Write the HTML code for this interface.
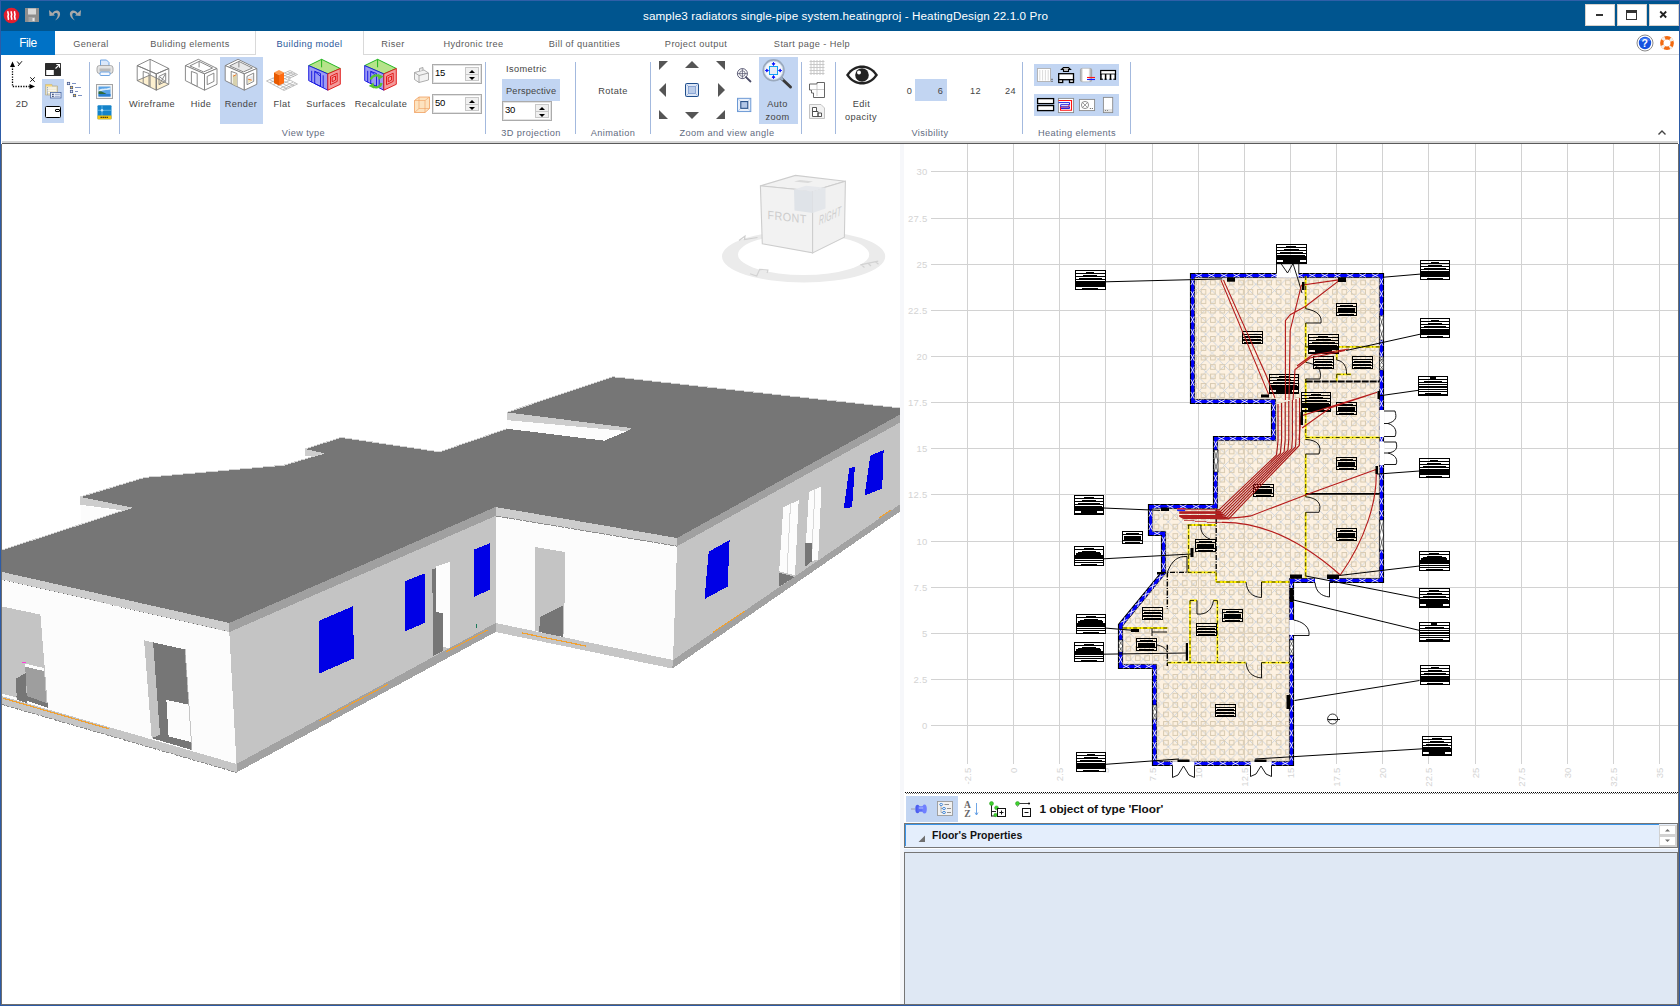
<!DOCTYPE html>
<html><head><meta charset="utf-8"><title>HeatingDesign</title>
<style>
*{box-sizing:border-box}
html,body{margin:0;padding:0}
body{width:1680px;height:1006px;position:relative;overflow:hidden;background:#fff;font-family:"Liberation Sans",sans-serif;font-size:9.200px;letter-spacing:0.400px;color:#444}
.abs{position:absolute}
.t{position:absolute;white-space:nowrap;line-height:12px;height:12px;transform:translate(-50%,-0.150px);text-align:center}
.tl{position:absolute;white-space:nowrap;line-height:12px;height:12px;transform:translateY(-0.050px)}
.hl{position:absolute;background:#c2d5f2}
.sep{position:absolute;width:1px;top:62px;height:72px;background:#a3b9de}
.grp{position:absolute;white-space:nowrap;line-height:12px;height:12px;transform:translate(-50%,-0.250px);color:#5f6b80;top:127px}
.tab{position:absolute;top:38px;white-space:nowrap;line-height:12px;height:12px;transform:translate(-50%,0.300px);color:#5a5a5a}
.spin{position:absolute;width:50px;height:20px;border:1px solid #ababab;background:#fff;box-shadow:inset 0 0 0 1px #e3e3e3}
.spin b{position:absolute;left:2px;top:2.200px;font-weight:normal;color:#000;font-size:9.500px;line-height:12px;letter-spacing:-0.200px}
.spin i{position:absolute;right:2px;width:14px;height:7.500px;background:#f0f0f0;border:1px solid #c8c8c8}
.spin i.u{top:2px}.spin i.d{bottom:2px}
.spin i:after{content:"";position:absolute;left:3px;top:2px;border-left:3px solid transparent;border-right:3px solid transparent}
.spin i.u:after{border-bottom:3px solid #000}
.spin i.d:after{border-top:3px solid #000}
svg{position:absolute;overflow:visible}
</style></head><body>
<!-- title bar -->
<div class="abs" style="left:0;top:0;width:1680px;height:31px;background:#00558f"></div>
<div class="abs" style="left:0;top:0;width:1680px;height:1px;background:#2f5fa8"></div>
<div class="abs" style="left:845.5px;top:9px;transform:translateX(-50%);color:#fff;font-size:11.700px;line-height:14px;white-space:nowrap;letter-spacing:0.090px">sample3 radiators single-pipe system.heatingproj - HeatingDesign 22.1.0 Pro</div>
<!-- app icon -->
<svg style="left:3px;top:7px" width="17" height="17" viewBox="0 0 17 17"><circle cx="8.5" cy="8.5" r="7.8" fill="#e31e2d"/><path d="M5.2 4.2c-1.2 1.6 1 2.6 0 4.3s1 2.600 0 4.300M8.500 4.200c-1.200 1.600 1 2.600 0 4.300s1 2.600 0 4.300M11.800 4.200c-1.200 1.600 1 2.600 0 4.300s1 2.600 0 4.300" stroke="#fff" stroke-width="1.600" fill="none"/></svg>
<!-- save icon -->
<svg style="left:25px;top:8px" width="14" height="14" viewBox="0 0 14 14"><rect x="0" y="0" width="14" height="14" fill="#8e8e8e"/><rect x="3" y="0.5" width="8" height="6" fill="#d9d9d9"/><rect x="3.500" y="9" width="6.500" height="5" fill="#a6a6a6"/><rect x="7.500" y="10" width="2" height="3" fill="#e6e6e6"/></svg>
<!-- undo / redo -->
<svg style="left:48px;top:7px" width="16" height="16" viewBox="0 0 16 16"><path d="M1 3 L1.500 9 L7 8.500 Z" fill="#a9a9a9"/><path d="M4 6.500 C7 1.500 13 3 12 8 C11.500 10.500 9.500 12.500 7 13.500 C9 11.500 10 9.500 9.700 7.500 C9.300 5.500 6.500 5.500 5.500 8" fill="#a9a9a9"/></svg>
<svg style="left:65.500px;top:7px" width="16" height="16" viewBox="0 0 16 16"><g transform="translate(16,0) scale(-1,1)"><path d="M1 3 L1.500 9 L7 8.500 Z" fill="#a9a9a9"/><path d="M4 6.500 C7 1.500 13 3 12 8 C11.500 10.500 9.500 12.500 7 13.500 C9 11.500 10 9.500 9.700 7.500 C9.300 5.500 6.500 5.500 5.500 8" fill="#a9a9a9"/></g></svg>
<!-- window buttons -->
<div class="abs" style="left:1585px;top:4px;width:30px;height:22px;background:#fff;border:1px solid #d8d2cc"></div>
<div class="abs" style="left:1617px;top:4px;width:30px;height:22px;background:#fff;border:1px solid #d8d2cc"></div>
<div class="abs" style="left:1649px;top:4px;width:30px;height:22px;background:#fff;border:1px solid #d8d2cc"></div>
<div class="abs" style="left:1596px;top:14px;width:7px;height:2px;background:#333"></div>
<div class="abs" style="left:1626px;top:10px;width:11px;height:10px;border:1px solid #333;border-top:3px solid #333"></div>
<svg style="left:1659px;top:10px" width="9" height="9" viewBox="0 0 9 9"><path d="M1.200 1.500L7.200 7.500M7.200 1.500L1.200 7.500" stroke="#222" stroke-width="1.800"/></svg>
<!-- tabs row -->
<div class="abs" style="left:1px;top:31px;width:54px;height:24px;background:#0072c6"></div>
<div class="abs" style="left:28px;top:35.500px;transform:translateX(-50%);color:#fff;font-size:12px;line-height:14px;letter-spacing:-0.4px">File</div>
<div class="abs" style="left:55px;top:54px;width:1624px;height:1px;background:#d9d9d9"></div>
<div class="abs" style="left:255px;top:31px;width:109px;height:24px;background:#fff;border:1px solid #d9d9d9;border-bottom:none;border-top:none"></div>
<div class="tab" style="left:91px">General</div>
<div class="tab" style="left:190px">Buliding elements</div>
<div class="tab" style="left:309.500px;color:#2b579a">Building model</div>
<div class="tab" style="left:393px">Riser</div>
<div class="tab" style="left:473.500px">Hydronic tree</div>
<div class="tab" style="left:584.500px">Bill of quantities</div>
<div class="tab" style="left:696px">Project output</div>
<div class="tab" style="left:812px">Start page - Help</div>
<!-- help icons -->
<svg style="left:1636px;top:34px" width="18" height="18" viewBox="0 0 18 18"><circle cx="9" cy="9" r="8" fill="#fff" stroke="#8a8a8a" stroke-width="1"/><circle cx="9" cy="9" r="6.200" fill="#1552e0"/><path d="M4 7a5.500 5.500 0 0 1 10 0a9 4 0 0 0-10 0z" fill="#5b93ff" opacity=".7"/><text x="9" y="12.800" font-family="Liberation Sans" font-weight="bold" font-size="10.500" fill="#fff" text-anchor="middle">?</text></svg>
<svg style="left:1659px;top:35px" width="16" height="16" viewBox="0 0 16 16"><circle cx="8" cy="8" r="5.200" fill="none" stroke="#f26a10" stroke-width="3.400"/><circle cx="8" cy="8" r="5.200" fill="none" stroke="#f3efe9" stroke-width="3.400" stroke-dasharray="3.200 5" stroke-dashoffset="1.600" transform="rotate(45 8 8)"/></svg>
<!-- ribbon body -->
<div class="abs" style="left:2px;top:141px;width:1676px;height:2px;background:#d6d6d6"></div>
<div class="abs" style="left:2px;top:143px;width:1676px;height:1px;background:#5a5a5a"></div>
<!-- group: 2D -->
<svg style="left:8px;top:58px" width="30" height="34" viewBox="8 58 30 34">
<path d="M12.500 66V86.500H30" stroke="#000" stroke-width="1.300" stroke-dasharray="1.300 1.300" fill="none"/>
<path d="M12.500 61.500L10 67H15Z" fill="#000"/><path d="M35 86.500L29.500 84V89Z" fill="#000"/>
<path d="M17.200 61.500L19.400 64.200M22 61.200L18 66" stroke="#000" stroke-width="0.900" fill="none"/>
<path d="M30.200 77.300L34.800 81.800M34.800 77.300L30.200 81.800" stroke="#000" stroke-width="0.900" fill="none"/>
</svg>
<div class="t" style="left:22px;top:98px">2D</div>
<svg style="left:45px;top:63px" width="16" height="13" viewBox="0 0 16 13"><rect width="16" height="13" rx="0.500" fill="#2b2b2b"/><rect x="1.200" y="7" width="7.600" height="5" fill="#fff"/><path d="M10.500 5.500L14.300 1.800M11.300 1.500H14.500V4.700" stroke="#fff" stroke-width="1.100" fill="none"/></svg>
<div class="hl" style="left:42px;top:79px;width:22px;height:44px"></div>
<!-- folder/properties icon -->
<svg style="left:45px;top:83px" width="17" height="16" viewBox="0 0 17 16"><path d="M0.500 1.500h6.500v1.500h5.500v9h-12z" fill="#e9e2c4" stroke="#b5ab86" stroke-width="0.700"/><rect x="0.800" y="1.600" width="6" height="1.600" fill="#f7d672"/><path d="M2 5h9M2 7.200h9M2 9.400h9" stroke="#fff" stroke-width="1"/><path d="M2 4.700h1M2 6.900h1M2 9.100h1M2 11h1" stroke="#5d79b3" stroke-width="0.800"/><rect x="5.500" y="9.500" width="10.500" height="5.500" fill="#eef2fa" stroke="#4a659e" stroke-width="0.800"/><path d="M7 11.300h1.800M7 13.300h1.800" stroke="#1d2f5e" stroke-width="1"/><path d="M9.800 11.300h5M9.800 13.300h5" stroke="#8a9cc6" stroke-width="0.900"/></svg>
<div class="abs" style="left:45px;top:106px;width:16px;height:12px;border:1.500px solid #000;border-radius:1.500px;background:#fff"></div>
<div class="abs" style="left:55px;top:108.500px;width:4.500px;height:3px;border:1px solid #000;border-radius:1px;background:#fff"></div>
<!-- tree icon -->
<svg style="left:66px;top:81px" width="18" height="18" viewBox="66 81 18 18"><g stroke="#3b4f86" stroke-width="0.700"><rect x="67.300" y="82.300" width="2.400" height="2.400" fill="#dfe6f5"/><rect x="70.300" y="86.300" width="2.400" height="2.400" fill="#f5c33a"/><rect x="70.300" y="90.300" width="2.400" height="2.400" fill="#dfe6f5"/><rect x="73.300" y="94.300" width="2.400" height="2.400" fill="#f5c33a"/></g><path d="M72 83.500h4M75 87.500h6M75 91.500h3M78 95.500h4" stroke="#6d86be" stroke-width="0.900"/></svg>
<div class="sep" style="left:89px"></div>
<!-- printer -->
<svg style="left:96px;top:59px" width="18" height="18" viewBox="0 0 18 18"><path d="M4.500 1h6l2.500 2.500V9h-8.500z" fill="#dbe8fa" stroke="#5d9be0" stroke-width="0.900"/><rect x="1" y="6.500" width="16" height="8" rx="2.500" fill="#e3e3e3" stroke="#9b9b9b" stroke-width="0.800"/><rect x="3.500" y="9.500" width="11" height="3" fill="#b9b9b9"/><rect x="4" y="13" width="10" height="3.500" rx="1" fill="#f4f8ff" stroke="#5d9be0" stroke-width="0.900"/></svg>
<!-- picture -->
<svg style="left:96px;top:84px" width="17" height="15" viewBox="0 0 17 15"><rect x="0.500" y="0.500" width="16" height="14" fill="#f3f3f3" stroke="#a4a4a4"/><rect x="2.500" y="2.500" width="12" height="10" fill="#5aa3e6"/><path d="M2.500 6.500c3-3 6-1 12-3v2c-4 1-8 0-12 3z" fill="#d9ecfb"/><path d="M2.500 7.500c3-1 5 1 8 2.500h-8z" fill="#2f6b3a"/><rect x="2.500" y="10" width="12" height="2.500" fill="#2c7fd1"/></svg>
<!-- dwg -->
<svg style="left:97px;top:105px" width="15" height="15" viewBox="0 0 15 15"><rect x="0.500" y="0.300" width="14" height="14" rx="1" fill="#1483c9"/><path d="M5 0.300V11M0.500 5.300H14.500" stroke="#7cc4ee" stroke-width="0.700"/><circle cx="5" cy="5.300" r="1.200" fill="#bfe4fa"/><rect x="0.500" y="10.500" width="14" height="3.800" fill="#f4c20d"/><path d="M3.500 12.400h8" stroke="#54430a" stroke-width="1.300" stroke-dasharray="1.500 0.500"/></svg>
<div class="sep" style="left:119px"></div>
<!-- view type group -->
<div class="hl" style="left:220px;top:57px;width:43px;height:67px"></div>
<svg style="left:0;top:0" width="1680" height="145" viewBox="0 0 1680 145">
<g transform="translate(137.2,59.3)" fill="none" stroke="#7d7d7d" stroke-width="0.9" stroke-linejoin="round">
<polygon points="0.0,21.3 19.1,30.9 31.6,25.0 12.9,15.7" fill="#fdf0cf" stroke="none"/>
<polygon points="12.9,0.0 31.6,9.2 19.1,14.6 0.0,6.3"/><polygon points="0.0,6.3 19.1,14.6 19.1,30.9 0.0,21.3"/><polygon points="19.1,14.6 31.6,9.2 31.6,25.0 19.1,30.9"/>
<path d="M12.9 0V15.7L0 21.3M12.9 15.7L31.6 25"/>
<polygon points="6.0,12.1 11.8,14.2 11.8,27.1 6.0,24.2"/><polygon points="21.8,17.1 28.5,13.8 28.5,22.1 21.8,25.4"/>
<path d="M12.9 15.700V27.800M19.100 14.600V30.900M22.500 17.500L28 22M22.500 24.800L28.200 14.500" />
</g>
<g transform="translate(185.4,59.3)" fill="#fff" stroke="#7d7d7d" stroke-width="0.9" stroke-linejoin="round">
<polygon points="12.9,0.0 31.6,9.2 19.1,14.6 0.0,6.3"/><polygon points="13.7,2.1 27.2,8.7 18.2,12.6 4.5,6.6"/><polygon points="0.0,6.3 19.1,14.6 19.1,30.9 0.0,21.3"/><polygon points="19.1,14.6 31.6,9.2 31.6,25.0 19.1,30.9"/>
<path d="M13.7 2.1V8.1"/>
<polygon points="6.0,12.1 11.8,14.2 11.8,27.1 6.0,24.2"/><polygon points="21.8,17.1 28.5,13.8 28.5,22.1 21.8,25.4"/>
</g>
<g transform="translate(225.2,59.3)" fill="#fff" stroke="#7d7d7d" stroke-width="0.9" stroke-linejoin="round">
<polygon points="12.9,0.0 31.6,9.2 19.1,14.6 0.0,6.3"/><polygon points="13.7,2.1 27.2,8.7 18.2,12.6 4.5,6.6" fill="#e9e9e9"/><polygon points="0.0,6.3 19.1,14.6 19.1,30.9 0.0,21.3"/><polygon points="19.1,14.6 31.6,9.2 31.6,25.0 19.1,30.9"/>
<path d="M13.7 2.1V8.1"/>
<polygon points="6.0,12.1 11.8,14.2 11.8,27.1 6.0,24.2"/><polygon points="7.5,15.0 11.8,16.5 11.8,27.1 7.5,25.0" fill="#d8d2ae" stroke="none"/><path d="M8 17L11 15.300" stroke="#f26a10" stroke-width="0.9"/>
<polygon points="21.8,17.1 28.5,13.8 28.5,22.1 21.8,25.4"/><polygon points="22.8,18.5 27.8,16.0 27.8,21.0 22.8,23.6" fill="#e9e9e9" stroke="none"/><polygon points="22.8,21.0 27.8,21.0 22.8,23.6" fill="#efe3b5" stroke="none"/><path d="M23 20L26.500 20.800" stroke="#f26a10" stroke-width="0.9"/>
</g>
<g fill="none" stroke="#9a9a9a" stroke-width="0.6">
<path d="M266.500 81L290 70.500L297.500 74.500L288 79L297.500 84L284 90.500Z"/>
<path d="M269.500 79.600L287 88.800M272.500 78.300L290.500 87.500M275.500 77L294 85.800M278.500 75.600L288.500 80.500M281.500 74.300L291 78.200M284.500 73L294 76.500M287.500 71.600L296 75.300"/>
<path d="M270 82.800L292.500 72M273.500 84.600L295 73.300M277 86.400L290 80.300M280.500 88.200L293 82.200M283 89.600L295.500 83.300"/>
</g>
<polygon points="274,72.500 279,70 284,72.500 279,75" fill="#ff9a4d"/><polygon points="274,72.500 279,75 279,85.500 274,83" fill="#e85a00"/><polygon points="279,75 284,72.500 284,83 279,85.500" fill="#ff6a10"/>
<g transform="translate(308.7,59.3)" stroke-width="0.9" stroke-linejoin="round">
<polygon points="12.9,0.0 31.6,9.2 19.1,14.6 0.0,6.3" fill="#b6e38a" stroke="#12b012"/>
<path d="M12.9 0V8" stroke="#12b012" fill="none"/>
<polygon points="0.0,6.3 19.1,14.6 19.1,30.9 0.0,21.3" fill="#9b9bf3" stroke="#1010e0"/>
<polygon points="19.1,14.6 31.6,9.2 31.6,25.0 19.1,30.9" fill="#f39a9a" stroke="#e01010"/>
<polygon points="6.0,12.1 11.8,14.2 11.8,27.1 6.0,24.2" fill="none" stroke="#1010e0"/><path d="M3 11.500V23M14.500 16V28.500M6 12.100L11.800 17" stroke="#1010e0" fill="none"/>
<polygon points="21.8,17.1 28.5,13.8 28.5,22.1 21.8,25.4" fill="none" stroke="#e01010"/><polygon points="23.5,18.3 26.8,16.7 26.8,20.8 23.5,22.5" fill="none" stroke="#e01010"/>
</g>
<g transform="translate(364.7,59.3)" stroke-width="0.9" stroke-linejoin="round">
<polygon points="12.9,0.0 31.6,9.2 19.1,14.6 0.0,6.3" fill="#b6e38a" stroke="#12b012"/>
<path d="M12.9 0V8" stroke="#12b012" fill="none"/>
<polygon points="0.0,6.3 19.1,14.6 19.1,30.9 0.0,21.3" fill="#9b9bf3" stroke="#1010e0"/>
<polygon points="19.1,14.6 31.6,9.2 31.6,25.0 19.1,30.9" fill="#f39a9a" stroke="#e01010"/>
<polygon points="6.0,12.1 11.8,14.2 11.8,27.1 6.0,24.2" fill="none" stroke="#1010e0"/><path d="M3 11.500V23M14.500 16V28.500M6 12.100L11.800 17" stroke="#1010e0" fill="none"/>
<polygon points="21.8,17.1 28.5,13.8 28.5,22.1 21.8,25.4" fill="none" stroke="#e01010"/><polygon points="23.5,18.3 26.8,16.7 26.8,20.8 23.5,22.5" fill="none" stroke="#e01010"/>
</g>
<g fill="none" stroke="#58c431" stroke-width="2.4" stroke-linecap="butt"><path d="M370.800 79.500A5.500 5.500 0 0 1 380 77"/><path d="M381.500 83A5.500 5.500 0 0 1 372 85.500"/></g>
<polygon points="378,74 383.500,76.500 378.500,80" fill="#58c431"/><polygon points="374,88.500 368.800,86 373.500,82.500" fill="#58c431"/>
<g fill="#f2f2f2" stroke="#9a9a9a" stroke-width="0.8" stroke-linejoin="round"><polygon points="414.500,72.500 424,70 428.500,73 428.500,80 419,82.500 414.500,79.500"/><path d="M414.500 72.500L419 75.500L428.500 73M419 75.500V82.500" fill="none"/><path d="M419.500 71V68.500L423 67.500V70" fill="#e8e8e8"/></g>
<g fill="#fde3c0" stroke="#f0a060" stroke-width="0.8" stroke-linejoin="round"><polygon points="414.500,100.500 419,97 429.500,97 429.500,108.500 425,112.500 414.500,112.500"/><path d="M414.500 100.500H425V112.500M425 100.500L429.500 97M419 97V108.500H429.500M419 108.500L414.500 112.500" fill="none" stroke-width="0.6"/></g>
</svg>
<div class="t" style="left:152px;top:98px">Wireframe</div>
<div class="t" style="left:201px;top:98px">Hide</div>
<div class="t" style="left:241px;top:98px">Render</div>
<div class="t" style="left:282px;top:98px">Flat</div>
<div class="t" style="left:326px;top:98px">Surfaces</div>
<div class="t" style="left:381px;top:98px">Recalculate</div>
<div class="spin" style="left:432px;top:64px"><b>15</b><i class="u"></i><i class="d"></i></div>
<div class="spin" style="left:432px;top:94px"><b>50</b><i class="u"></i><i class="d"></i></div>
<div class="grp" style="left:303.500px">View type</div>
<div class="sep" style="left:485px"></div>
<!-- 3D projection -->
<div class="tl" style="left:506px;top:63px">Isometric</div>
<div class="hl" style="left:502px;top:79px;width:58px;height:22px"></div>
<div class="tl" style="left:506px;top:85px;letter-spacing:0.200px">Perspective</div>
<div class="spin" style="left:502px;top:101px;height:20px"><b>30</b><i class="u"></i><i class="d"></i></div>
<div class="grp" style="left:531px">3D projection</div>
<div class="sep" style="left:575px"></div>
<div class="t" style="left:613px;top:85px">Rotate</div>
<div class="grp" style="left:613px">Animation</div>
<div class="sep" style="left:650px"></div>
<!-- zoom & view angle -->
<div class="hl" style="left:759px;top:57px;width:39px;height:67px"></div>
<svg style="left:0;top:0" width="1680" height="145" viewBox="0 0 1680 145">
<g fill="#555">
<polygon points="659,61 668,61 659,70"/><polygon points="685,68 692,61 699,68"/><polygon points="716,61 725,61 725,70"/>
<polygon points="666,83 659,90 666,97"/><polygon points="718,83 725,90 718,97"/>
<polygon points="659,110 668,119 659,119"/><polygon points="685,112 699,112 692,119"/><polygon points="725,110 725,119 716,119"/>
</g>
<rect x="685.500" y="83.500" width="13" height="13" rx="1" fill="#dce6f5" stroke="#1f4e8c" stroke-width="1"/>
<rect x="688.500" y="86.500" width="7" height="7" fill="#b9cbe8" stroke="#7c9bd0" stroke-width="0.800"/>
<path d="M686 84L688.500 86.500M698 84L695.500 86.500M686 96L688.500 93.500M698 96L695.500 93.500" stroke="#7c9bd0" stroke-width="0.600"/>
<!-- zoom cross -->
<circle cx="742.400" cy="73.600" r="5" fill="#fff" stroke="#4a4a66" stroke-width="0.900"/>
<path d="M742.400 68.600V78.600M737.400 73.600H747.400" stroke="#4a4a66" stroke-width="0.700" fill="none"/><circle cx="742.400" cy="73.600" r="2.800" fill="none" stroke="#4a4a66" stroke-width="0.700"/>
<path d="M746 77.200L750.500 81.500" stroke="#4a4a66" stroke-width="1.800" stroke-linecap="round"/>
<!-- zoom extents -->
<rect x="737.500" y="98.300" width="13.300" height="13.300" fill="#eaf0fa" stroke="#5d8fd1" stroke-width="0.900"/>
<path d="M737.500 98.300L740.800 101.600M750.800 98.300L747.800 101.600M737.500 111.600L740.800 108.300M750.800 111.600L747.800 108.300" stroke="#8fb0de" stroke-width="0.600"/>
<rect x="740.800" y="101.600" width="7" height="6.700" fill="#b3c6e6" stroke="#1b4580" stroke-width="1"/>
<!-- auto zoom magnifier -->
<path d="M781.500 78.500L790.500 87" stroke="#3a3a3a" stroke-width="3" stroke-linecap="round"/>
<path d="M780 77L783 80" stroke="#9fb2c8" stroke-width="2.200"/>
<circle cx="773.600" cy="70.300" r="10.300" fill="#f4f7fc" stroke="#9aa9bd" stroke-width="1.800"/>
<circle cx="773.600" cy="70.300" r="9.200" fill="none" stroke="#c9d6e6" stroke-width="0.800"/>
<rect x="769.500" y="66.500" width="8" height="8" fill="#e6ecf8" stroke="#14a0f0" stroke-width="1"/>
<g stroke="#0a14ff" stroke-width="0.900" fill="#0a14ff"><path d="M773.500 62V65M773.500 76V79M765 70.500H768M779 70.500H782" fill="none"/><polygon points="772.200,63.500 774.800,63.500 773.500,65.500" /><polygon points="772.200,77.500 774.800,77.500 773.500,75.500"/><polygon points="766.500,69.200 766.500,71.800 768.500,70.500"/><polygon points="780.500,69.200 780.500,71.800 778.500,70.500"/></g>
<!-- grid icon -->
<g stroke="#c4c4c4" stroke-width="0.900"><path d="M811 60V75M814 60V75M817 60V75M820 60V75M823 60V75M809.500 61.500H824.500M809.500 64.500H824.500M809.500 67.500H824.500M809.500 70.500H824.500M809.500 73.500H824.500"/></g>
<!-- plan icon -->
<path d="M809.500 84H817V82.500H824.500V97.500H813.500V93H811.500V90H809.500Z" fill="#fff" stroke="#555" stroke-width="0.900"/>
<path d="M817 84V96M811.500 89.500H824" stroke="#b8b8b8" stroke-width="0.700"/>
<!-- building doc icon -->
<path d="M809.500 104.500H821L824.500 108V118.500H809.500Z" fill="#f2f2f2" stroke="#b5b5b5" stroke-width="0.800"/>
<path d="M812.500 107.500H816.500V111.500H812.500ZM812.500 111.500H818V116.500H812.500ZM818 113H821.500V116.500H818Z" fill="#fff" stroke="#444" stroke-width="0.900"/>
<!-- eye -->
<path d="M846 75C851 67.500 857 65.500 862 65.500C867 65.500 873 67.500 878 75C873 82.500 867 84.500 862 84.500C857 84.500 851 82.500 846 75Z" fill="#222"/>
<path d="M849 75C853 69.500 857.500 68 862 68C866.500 68 871 69.500 875 75C871 80.500 866.500 82 862 82C857.500 82 853 80.500 849 75Z" fill="#fff"/>
<circle cx="862" cy="75" r="6.800" fill="#222"/><circle cx="859" cy="72.500" r="2" fill="#fff"/>
</svg>
<div class="t" style="left:777.500px;top:98px">Auto</div>
<div class="t" style="left:777.500px;top:111px">zoom</div>
<div class="grp" style="left:727px">Zoom and view angle</div>
<div class="sep" style="left:801px"></div>
<div class="sep" style="left:835px"></div>
<div class="t" style="left:861.500px;top:98px">Edit</div>
<div class="t" style="left:861px;top:111px">opacity</div>
<!-- visibility -->
<div class="hl" style="left:915px;top:79px;width:32px;height:22px"></div>
<div class="t" style="left:909.500px;top:85px">0</div>
<div class="t" style="left:940.500px;top:85px">6</div>
<div class="t" style="left:975.500px;top:85px">12</div>
<div class="t" style="left:1010.500px;top:85px">24</div>
<div class="grp" style="left:930px">Visibility</div>
<div class="sep" style="left:1022px"></div>
<!-- heating elements -->
<div class="hl" style="left:1034px;top:64px;width:85px;height:22px"></div>
<div class="hl" style="left:1034px;top:94px;width:85px;height:22px"></div>
<svg style="left:0;top:0" width="1680" height="145" viewBox="0 0 1680 145">
<rect x="1037.500" y="68.500" width="13" height="13" fill="#fff" stroke="#b0b0b0" stroke-width="0.900"/>
<path d="M1039.800 70V80.500M1042.600 70V80.500M1045.400 70V80.500M1048.200 70V80.500" stroke="#d0d0d0" stroke-width="0.800"/>
<path d="M1051 79.300H1053M1051 81.300H1053" stroke="#666" stroke-width="0.900"/>
<path d="M1061.500 69.500L1063.500 67.500H1068.500L1070.500 69.500H1068.500V71.500H1063.500V69.500Z" fill="#bdbdbd" stroke="#000" stroke-width="1.100"/>
<rect x="1058.700" y="73.700" width="14.800" height="6" fill="#fff" stroke="#000" stroke-width="1.300"/>
<rect x="1058.700" y="79.700" width="4" height="2.800" fill="#fff" stroke="#000" stroke-width="1.300"/>
<rect x="1069.500" y="79.700" width="4" height="2.800" fill="#fff" stroke="#000" stroke-width="1.300"/>
<defs><linearGradient id="tk" x1="0" x2="1"><stop offset="0" stop-color="#8f8f8f"/><stop offset="0.250" stop-color="#fff"/><stop offset="0.700" stop-color="#fff"/><stop offset="1" stop-color="#8a8a8a"/></linearGradient></defs>
<rect x="1080.300" y="68.300" width="11.500" height="13.500" rx="1.800" fill="url(#tk)" stroke="#a8a8a8" stroke-width="0.600"/>
<path d="M1087 77.500H1095" stroke="#ff1515" stroke-width="1.100"/><path d="M1087 79.500H1095" stroke="#1515ff" stroke-width="1.100"/>
<rect x="1100.700" y="70.500" width="14.800" height="3.700" fill="#fff" stroke="#000" stroke-width="1.200"/>
<rect x="1101.300" y="74.500" width="13.600" height="4.500" fill="#fff"/>
<path d="M1100.900 74V79.700M1105.600 74V79.700M1110.500 74V79.700M1115.300 74V79.700" stroke="#000" stroke-width="1.500"/>
<path d="M1100.200 79.200H1103M1104.500 79.200H1106.700M1109.400 79.200H1111.600M1113.300 79.200H1116" stroke="#000" stroke-width="1"/>
<rect x="1037.600" y="98.600" width="16" height="5" fill="#fff" stroke="#000" stroke-width="1.300"/>
<rect x="1037.600" y="105.600" width="16" height="5" fill="#fff" stroke="#000" stroke-width="1.300"/>
<rect x="1058.400" y="98.400" width="15.200" height="14.200" fill="#fff" stroke="#8a8a8a" stroke-width="0.900"/>
<path d="M1058.500 100.500H1071.500V110.300H1060.500V107H1069V104.500" stroke="#ff1010" stroke-width="1.100" fill="none"/>
<path d="M1058.500 102.600H1069.500V104.700H1060.700V106.900H1069.500V108.500H1061" stroke="#2020e0" stroke-width="1" fill="none"/>
<rect x="1079.400" y="99.400" width="15.200" height="11.200" fill="#fff" stroke="#8a8a8a" stroke-width="0.900"/>
<circle cx="1085" cy="105" r="3.600" fill="none" stroke="#777" stroke-width="0.800"/><path d="M1082.500 102.500L1087.500 107.500M1087.500 102.500L1082.500 107.500" stroke="#777" stroke-width="0.700"/>
<path d="M1089.800 108.500H1091M1091.800 108.500H1093" stroke="#777" stroke-width="1"/>
<rect x="1103.400" y="97.400" width="9.300" height="15.200" fill="#fff" stroke="#8a8a8a" stroke-width="0.900"/>
<rect x="1104" y="109" width="8" height="3" fill="#e3e3e3"/><path d="M1105 110.500H1106M1107 110.500H1108" stroke="#777" stroke-width="0.900"/>
<path d="M1658.500 134.500L1662 131L1665.500 134.500" stroke="#444" stroke-width="1.400" fill="none"/>
</svg>
<div class="grp" style="left:1077px">Heating elements</div>
<div class="sep" style="left:1130px"></div>
<!-- 3D view pane -->
<svg style="left:0;top:144px" width="900" height="860" viewBox="0 144 900 860">
<defs><clipPath id="c3d"><rect x="2" y="144" width="898" height="860"/></clipPath></defs>
<g clip-path="url(#c3d)" shape-rendering="crispEdges">
<!-- slabs -->
<polygon points="0,695 236.500,764 236.500,772.500 0,704" fill="#c6c6c6"/>
<polygon points="236.500,764 495.500,623 495.500,632 236.500,772.500" fill="#a2a2a2"/>
<polygon points="495.500,623 673,660 672.300,668.500 495.500,632" fill="#c6c6c6"/>
<polygon points="673,660 900,504.400 900,511.500 672.300,668.500" fill="#a2a2a2"/>
<!-- walls -->
<polygon points="0,578 229.300,632.100 236.500,764 0,695.500" fill="#fcfcfc"/>
<polygon points="229.300,632.100 495.500,516 495.500,623 236.500,764" fill="#c4c4c4"/>
<polygon points="495.500,516 677.100,546.200 673,660 495.500,623" fill="#fcfcfc"/>
<polygon points="677.100,546.200 900,422.500 900,504.400 673,660" fill="#c4c4c4"/>
<!-- roof -->
<polygon points="612.500,376.700 900,407.900 900,414.500 677.100,538 495.500,507 229.300,623 0,571.500 0,550.600 132.200,507.500 79.900,496.900 144.700,477.400 283.800,465.200 324.200,453.200 304.700,449 340.900,437.400 439.700,451.800 506.800,428.700 506.800,412.300" fill="#767676"/>
<path d="M506.800 412.300L612.500 376.700L900 407.900M0 550.600L132.200 507.500M79.900 496.900L144.700 477.400L283.800 465.200L324.200 453.200M304.700 449L340.900 437.400L439.700 451.800L506.800 428.700" stroke="#d4d4d4" stroke-width="1" fill="none"/>
<!-- fascias -->
<polygon points="0,571.500 229.300,623 229.300,632.100 0,579" fill="#cdcdcd"/>
<polygon points="229.300,623 495.500,507 495.500,516 229.300,632.100" fill="#a0a0a0"/>
<polygon points="495.500,507 677.100,538 677.100,546.200 495.500,516" fill="#cdcdcd"/>
<polygon points="677.100,538 900,414.500 900,422.500 677.100,546.200" fill="#a0a0a0"/>
<polygon points="506.800,412.300 632,428.200 627,431.200 506.800,420.100" fill="#cdcdcd"/>
<polygon points="506.800,420.100 627,431.200 604.200,440.700 506.800,428.700" fill="#fcfcfc"/>
<polygon points="79.900,496.900 132.200,507.500 124,510.500 79.900,504.700" fill="#cdcdcd"/>
<polygon points="80.500,505 118,511.500 81.500,523.500" fill="#fcfcfc"/>
<polygon points="304.700,449 324.200,453.200 316,456 304.700,455.500" fill="#cdcdcd"/>
<path d="M0 579L229.300 632.100" stroke="#707070" stroke-width="1" stroke-dasharray="1 3.600" fill="none"/><path d="M495.500 516L677.100 546.200" stroke="#8c8c8c" stroke-width="1" stroke-dasharray="6 1" fill="none"/>
<!-- left wall: opening at far left -->
<polygon points="0,606 40.400,614.600 47.900,706.400 0,693" fill="#c4c4c4"/>
<polygon points="15.500,679 25.500,673 27,703 17,700" fill="#767676"/>
<polygon points="25,665 44,669.500 46.500,705 27.500,700" fill="#9e9e9e"/>
<polygon points="24.500,663.500 44,668 44,671 24.500,666.500" fill="#fcfcfc"/>
<rect x="22" y="661.500" width="4" height="1.500" fill="#ff3ad8"/>
<polygon points="14.200,696.600 26.800,696 47.700,703.500 47.700,707.800" fill="#767676"/>
<path d="M2 704.500L236.500 772.500" stroke="#8a8a8a" stroke-width="1" stroke-dasharray="3 1.500" fill="none"/>
<!-- left wall: door -->
<polygon points="144.100,640.200 153.100,642.400 160,734.800 151.700,738.100" fill="#c4c4c4"/>
<polygon points="153.100,642.400 185.100,649.400 192,750.100 151.700,738.100 160,734.800" fill="#767676"/>
<polygon points="166.400,700 189.200,704.700 191.500,742 168.600,736.500" fill="#fcfcfc"/>
<path d="M185.100 649.400L192 750.100" stroke="#b8b8b8" stroke-width="0.800"/><path d="M2.800 698.100L108.500 728.700" stroke="#f0a030" stroke-width="1.200"/>
<!-- gray wall 1 -->
<polygon points="319.200,620.700 352.900,606.200 354,658.300 319.200,673.600" fill="#0000e6"/>
<polygon points="404.900,581.200 424.900,573.400 424.900,622.900 404.900,631.300" fill="#0000e6"/>
<polygon points="432.400,569.400 442.700,565.500 442.700,651 432.800,655.900" fill="#767676"/>
<polygon points="435.800,566.500 449.700,561.900 449.700,648 443.300,647 443.300,613.200 436.400,612.200" fill="#fcfcfc"/>
<polygon points="473.900,549.600 489.800,543.200 489.800,589.700 473.900,596.900" fill="#0000e6"/>
<path d="M446.100 651.900L487.500 630.100M319.200 720.900L388.200 684.200" stroke="#f0a030" stroke-width="1.200"/>
<rect x="476" y="624" width="1" height="4" fill="#1a7a5a"/>
<!-- white wall 2 -->
<polygon points="535.200,547 564.600,552 564.600,600.200 563.400,637 535.200,631" fill="#c4c4c4"/>
<polygon points="540.100,617.100 563.400,605.200 563.400,637 539.100,632" fill="#767676"/>
<path d="M522.200 633L585.800 646" stroke="#f0a030" stroke-width="1.200"/>
<!-- gray wall 2 -->
<polygon points="708.700,551.700 729.600,540 727.700,586.500 704.500,599.100" fill="#0000e6"/>
<polygon points="783.300,507.200 798.700,500.200 795,575.400 779.200,571.200" fill="#fcfcfc"/>
<path d="M790.500 504L787 573" stroke="#d8d8d8" stroke-width="1"/>
<polygon points="809,491.900 821.500,486.300 818.100,560.100 804.800,561.500" fill="#fcfcfc"/>
<path d="M815 489L811.500 560" stroke="#d8d8d8" stroke-width="1"/>
<polygon points="779.200,572.600 795,577 779.200,586.500" fill="#767676"/>
<polygon points="804.800,543.400 811.700,543.400 811.700,561.500 804.800,567" fill="#767676"/>
<polygon points="849.300,468.200 854.900,466.800 852.100,507.200 843.800,508.600" fill="#0000e6"/>
<polygon points="870.200,455.700 883.600,450.100 882.200,488.500 864.600,495.500" fill="#0000e6"/>
<path d="M712.900 632.500L744.900 611M878.600 518.300L891 510" stroke="#f0a030" stroke-width="1.200"/>
</g>
<!-- view cube -->
<g>
<ellipse cx="803.600" cy="256.500" rx="81.600" ry="26" fill="#ebebeb"/>
<ellipse cx="803.600" cy="254.500" rx="65.600" ry="20.500" fill="#fff"/>
<polygon points="760.400,185.800 795.400,175.400 845.400,181.300 812.600,191" fill="#f2f2f2" stroke="#cdcdcd" stroke-width="1.100"/>
<polygon points="760.400,185.800 812.600,191 812.600,252.900 762.300,243.700" fill="#f2f2f2" stroke="#cdcdcd" stroke-width="1.100"/>
<polygon points="812.600,191 845.400,181.300 844.400,237.200 812.600,252.900" fill="#f1f1f1" stroke="#cdcdcd" stroke-width="1.100"/>
<polygon points="794,189.500 812.600,191.500 812.600,213 794.500,210.500" fill="#dfe3e8"/>
<polygon points="812.600,191.500 825.500,187.800 825.500,208.500 812.600,213" fill="#e3e6ea"/>
<polygon points="794,189.500 806,185.800 825.500,187.800 812.600,191.500" fill="#e6e8ec"/>
<text transform="translate(767.500,219) skewY(6.500) scale(0.900,1)" font-family="Liberation Sans" font-size="12" fill="#cdcdcd" letter-spacing="0.500">FRONT</text>
<text transform="translate(819,225) skewY(-24) scale(0.520,1)" font-family="Liberation Sans" font-size="13" fill="#cdcdcd" font-style="italic" letter-spacing="0.500">RIGHT</text>
<path d="M794 181.500L800 180L813 181.500L808 183Z" fill="#dadada"/>
<path d="M739 240.500L745 236L744.500 239.500L757.500 237.500" stroke="#cfcfcf" stroke-width="1.200" fill="none"/>
<path d="M750 273.800L756.700 276L759.700 269.300L767.900 270.100L767.100 273" stroke="#d2d2d2" stroke-width="1.200" fill="none"/>
<path d="M860.300 264.800L878.200 261.100M861 264.600L864.500 267.500M868 263.200L871 266M875.500 261.700L878.500 264.200" stroke="#d2d2d2" stroke-width="1.200" fill="none"/>
</g>
</svg>
<!-- splitter -->
<div class="abs" style="left:900px;top:144px;width:4px;height:860px;background:#f6f7fa"></div>
<!-- plan pane -->
<svg style="left:904px;top:144px" width="774" height="650" viewBox="904 144 774 650">
<defs>
<pattern id="fp" x="1198.8" y="277.8" width="9.39" height="9.39" patternUnits="userSpaceOnUse"><rect x="2.3950000000000005" y="2.3950000000000005" width="4.6" height="4.6" fill="none" stroke="#d8cab0" stroke-width="1"/></pattern>
<pattern id="fd" x="1205.8" y="296.8" width="12.5" height="12.5" patternUnits="userSpaceOnUse"><path d="M0 0L12.5 12.5M12.5 0L0 12.5" fill="none" stroke="#ccd3dd" stroke-width="0.9"/></pattern>
<clipPath id="cpl"><rect x="904" y="144" width="774" height="649"/></clipPath>
</defs>
<g clip-path="url(#cpl)">
<path d="M967.5 144V764M1013.5 144V764M1059.5 144V764M1105.5 144V764M1152.5 144V764M1198.5 144V764M1244.5 144V764M1290.5 144V764M1336.5 144V764M1382.5 144V764M1428.5 144V764M1475.5 144V764M1521.5 144V764M1567.5 144V764M1613.5 144V764M1659.5 144V764M931 171.5H1678M931 218.5H1678M931 264.5H1678M931 310.5H1678M931 356.5H1678M931 402.5H1678M931 448.5H1678M931 494.5H1678M931 541.5H1678M931 587.5H1678M931 633.5H1678M931 679.5H1678M931 725.5H1678" stroke="#d2d2d2" stroke-width="1" fill="none" shape-rendering="crispEdges"/>
<text x="927.5" y="175.3" text-anchor="end" font-size="9.5" letter-spacing="0.25" fill="#d4d4d4">30</text>
<text x="927.5" y="222.3" text-anchor="end" font-size="9.5" letter-spacing="0.25" fill="#d4d4d4">27.5</text>
<text x="927.5" y="268.3" text-anchor="end" font-size="9.5" letter-spacing="0.25" fill="#d4d4d4">25</text>
<text x="927.5" y="314.3" text-anchor="end" font-size="9.5" letter-spacing="0.25" fill="#d4d4d4">22.5</text>
<text x="927.5" y="360.3" text-anchor="end" font-size="9.5" letter-spacing="0.25" fill="#d4d4d4">20</text>
<text x="927.5" y="406.3" text-anchor="end" font-size="9.5" letter-spacing="0.25" fill="#d4d4d4">17.5</text>
<text x="927.5" y="452.3" text-anchor="end" font-size="9.5" letter-spacing="0.25" fill="#d4d4d4">15</text>
<text x="927.5" y="498.3" text-anchor="end" font-size="9.5" letter-spacing="0.25" fill="#d4d4d4">12.5</text>
<text x="927.5" y="545.3" text-anchor="end" font-size="9.5" letter-spacing="0.25" fill="#d4d4d4">10</text>
<text x="927.5" y="591.3" text-anchor="end" font-size="9.5" letter-spacing="0.25" fill="#d4d4d4">7.5</text>
<text x="927.5" y="637.3" text-anchor="end" font-size="9.5" letter-spacing="0.25" fill="#d4d4d4">5</text>
<text x="927.5" y="683.3" text-anchor="end" font-size="9.5" letter-spacing="0.25" fill="#d4d4d4">2.5</text>
<text x="927.5" y="729.3" text-anchor="end" font-size="9.5" letter-spacing="0.25" fill="#d4d4d4">0</text>
<text transform="translate(971.1,767.4) rotate(-90)" text-anchor="end" font-size="9.5" letter-spacing="0.2" fill="#d4d4d4">-2.5</text>
<text transform="translate(1017.1,767.4) rotate(-90)" text-anchor="end" font-size="9.5" letter-spacing="0.2" fill="#d4d4d4">0</text>
<text transform="translate(1063.1,767.4) rotate(-90)" text-anchor="end" font-size="9.5" letter-spacing="0.2" fill="#d4d4d4">2.5</text>
<text transform="translate(1109.1,767.4) rotate(-90)" text-anchor="end" font-size="9.5" letter-spacing="0.2" fill="#d4d4d4">5</text>
<text transform="translate(1156.1,767.4) rotate(-90)" text-anchor="end" font-size="9.5" letter-spacing="0.2" fill="#d4d4d4">7.5</text>
<text transform="translate(1202.1,767.4) rotate(-90)" text-anchor="end" font-size="9.5" letter-spacing="0.2" fill="#d4d4d4">10</text>
<text transform="translate(1248.1,767.4) rotate(-90)" text-anchor="end" font-size="9.5" letter-spacing="0.2" fill="#d4d4d4">12.5</text>
<text transform="translate(1294.1,767.4) rotate(-90)" text-anchor="end" font-size="9.5" letter-spacing="0.2" fill="#d4d4d4">15</text>
<text transform="translate(1340.1,767.4) rotate(-90)" text-anchor="end" font-size="9.5" letter-spacing="0.2" fill="#d4d4d4">17.5</text>
<text transform="translate(1386.1,767.4) rotate(-90)" text-anchor="end" font-size="9.5" letter-spacing="0.2" fill="#d4d4d4">20</text>
<text transform="translate(1432.1,767.4) rotate(-90)" text-anchor="end" font-size="9.5" letter-spacing="0.2" fill="#d4d4d4">22.5</text>
<text transform="translate(1479.1,767.4) rotate(-90)" text-anchor="end" font-size="9.5" letter-spacing="0.2" fill="#d4d4d4">25</text>
<text transform="translate(1525.1,767.4) rotate(-90)" text-anchor="end" font-size="9.5" letter-spacing="0.2" fill="#d4d4d4">27.5</text>
<text transform="translate(1571.1,767.4) rotate(-90)" text-anchor="end" font-size="9.5" letter-spacing="0.2" fill="#d4d4d4">30</text>
<text transform="translate(1617.1,767.4) rotate(-90)" text-anchor="end" font-size="9.5" letter-spacing="0.2" fill="#d4d4d4">32.5</text>
<text transform="translate(1663.1,767.4) rotate(-90)" text-anchor="end" font-size="9.5" letter-spacing="0.2" fill="#d4d4d4">35</text>
<polygon points="1190.5,273.5 1383.5,273.5 1383.5,582.5 1293.5,582.5 1293.5,765.5 1152.5,765.5 1152.5,668.5 1118.5,668.5 1118.5,624.5 1161.5,572.0 1161.5,535.5 1148.5,535.5 1148.5,504.5 1213.5,504.5 1213.5,436.5 1271.5,436.5 1271.5,403.5 1190.5,403.5" fill="#0000fa" stroke="#000" stroke-width="1.150" stroke-linejoin="miter"/>
<polygon points="1194.6,277.6 1379.4,277.6 1379.4,578.4 1289.4,578.4 1289.4,761.4 1156.6,761.4 1156.6,664.4 1122.6,664.4 1122.6,626.0 1165.6,573.5 1165.6,531.4 1152.6,531.4 1152.6,508.6 1217.6,508.6 1217.6,440.6 1275.6,440.6 1275.6,399.4 1194.6,399.4" fill="#fdf1e1" stroke="#000" stroke-width="0.800"/>
<polygon points="1194.6,277.6 1379.4,277.6 1379.4,578.4 1289.4,578.4 1289.4,761.4 1156.6,761.4 1156.6,664.4 1122.6,664.4 1122.6,626.0 1165.6,573.5 1165.6,531.4 1152.6,531.4 1152.6,508.6 1217.6,508.6 1217.6,440.6 1275.6,440.6 1275.6,399.4 1194.6,399.4" fill="url(#fd)"/>
<polygon points="1194.6,277.6 1379.4,277.6 1379.4,578.4 1289.4,578.4 1289.4,761.4 1156.6,761.4 1156.6,664.4 1122.6,664.4 1122.6,626.0 1165.6,573.5 1165.6,531.4 1152.6,531.4 1152.6,508.6 1217.6,508.6 1217.6,440.6 1275.6,440.6 1275.6,399.4 1194.6,399.4" fill="url(#fp)"/>
<clipPath id="cin"><polygon points="1194.6,277.6 1379.4,277.6 1379.4,578.4 1289.4,578.4 1289.4,761.4 1156.6,761.4 1156.6,664.4 1122.6,664.4 1122.6,626.0 1165.6,573.5 1165.6,531.4 1152.6,531.4 1152.6,508.6 1217.6,508.6 1217.6,440.6 1275.6,440.6 1275.6,399.4 1194.6,399.4"/></clipPath>
<path d="M967.5 144V764M1013.5 144V764M1059.5 144V764M1105.5 144V764M1152.5 144V764M1198.5 144V764M1244.5 144V764M1290.5 144V764M1336.5 144V764M1382.5 144V764M1428.5 144V764M1475.5 144V764M1521.5 144V764M1567.5 144V764M1613.5 144V764M1659.5 144V764M931 171.5H1678M931 218.5H1678M931 264.5H1678M931 310.5H1678M931 356.5H1678M931 402.5H1678M931 448.5H1678M931 494.5H1678M931 541.5H1678M931 587.5H1678M931 633.5H1678M931 679.5H1678M931 725.5H1678" stroke="#ddd0bb" stroke-width="1" fill="none" clip-path="url(#cin)" shape-rendering="crispEdges"/>
<path d="M1195.5 273.8L1202.1 277.2M1195.5 277.2L1202.1 273.8M1208.1 273.8L1214.7 277.2M1208.1 277.2L1214.7 273.8M1220.7 273.8L1227.3 277.2M1220.7 277.2L1227.3 273.8M1233.3 273.8L1239.9 277.2M1233.3 277.2L1239.9 273.8M1245.9 273.8L1252.5 277.2M1245.9 277.2L1252.5 273.8M1258.5 273.8L1265.1 277.2M1258.5 277.2L1265.1 273.8M1271.1 273.8L1277.7 277.2M1271.1 277.2L1277.7 273.8M1283.7 273.8L1290.3 277.2M1283.7 277.2L1290.3 273.8M1296.3 273.8L1302.9 277.2M1296.3 277.2L1302.9 273.8M1308.9 273.8L1315.5 277.2M1308.9 277.2L1315.5 273.8M1321.5 273.8L1328.1 277.2M1321.5 277.2L1328.1 273.8M1334.1 273.8L1340.7 277.2M1334.1 277.2L1340.7 273.8M1346.7 273.8L1353.3 277.2M1346.7 277.2L1353.3 273.8M1359.3 273.8L1365.9 277.2M1359.3 277.2L1365.9 273.8M1371.9 273.8L1378.5 277.2M1371.9 277.2L1378.5 273.8M1383.1 278.3L1379.7 284.9M1379.7 278.3L1383.1 284.9M1383.1 290.5L1379.7 297.1M1379.7 290.5L1383.1 297.1M1383.1 302.7L1379.7 309.3M1379.7 302.7L1383.1 309.3M1383.1 314.9L1379.7 321.5M1379.7 314.9L1383.1 321.5M1383.1 327.1L1379.7 333.7M1379.7 327.1L1383.1 333.7M1383.1 339.3L1379.7 345.9M1379.7 339.3L1383.1 345.9M1383.1 351.5L1379.7 358.1M1379.7 351.5L1383.1 358.1M1383.1 363.7L1379.7 370.3M1379.7 363.7L1383.1 370.3M1383.1 375.9L1379.7 382.5M1379.7 375.9L1383.1 382.5M1383.1 388.1L1379.7 394.7M1379.7 388.1L1383.1 394.7M1383.1 400.3L1379.7 406.9M1379.7 400.3L1383.1 406.9M1383.1 412.5L1379.7 419.1M1379.7 412.5L1383.1 419.1M1383.1 424.7L1379.7 431.3M1379.7 424.7L1383.1 431.3M1383.2 436.9L1379.8 443.5M1379.8 436.9L1383.2 443.5M1383.2 449.1L1379.8 455.7M1379.8 449.1L1383.2 455.7M1383.2 461.3L1379.8 467.9M1379.8 461.3L1383.2 467.9M1383.2 473.5L1379.8 480.1M1379.8 473.5L1383.2 480.1M1383.2 485.7L1379.8 492.3M1379.8 485.7L1383.2 492.3M1383.2 497.9L1379.8 504.5M1379.8 497.9L1383.2 504.5M1383.2 510.1L1379.8 516.7M1379.8 510.1L1383.2 516.7M1383.2 522.3L1379.8 528.9M1379.8 522.3L1383.2 528.9M1383.2 534.5L1379.8 541.1M1379.8 534.5L1383.2 541.1M1383.2 546.7L1379.8 553.3M1379.8 546.7L1383.2 553.3M1383.2 558.9L1379.8 565.5M1379.8 558.9L1383.2 565.5M1383.2 571.1L1379.8 577.7M1379.8 571.1L1383.2 577.7M1378.3 582.2L1371.7 578.8M1378.3 578.8L1371.7 582.2M1365.5 582.2L1358.9 578.8M1365.5 578.8L1358.9 582.2M1352.6 582.2L1346.0 578.8M1352.6 578.8L1346.0 582.2M1339.7 582.2L1333.1 578.8M1339.7 578.8L1333.1 582.2M1326.9 582.2L1320.3 578.8M1326.9 578.8L1320.3 582.2M1314.0 582.2L1307.4 578.8M1314.0 578.8L1307.4 582.2M1301.2 582.2L1294.6 578.8M1301.2 578.8L1294.6 582.2M1293.1 583.3L1289.7 589.9M1289.7 583.3L1293.1 589.9M1293.1 595.5L1289.7 602.1M1289.7 595.5L1293.1 602.1M1293.1 607.7L1289.7 614.3M1289.7 607.7L1293.1 614.3M1293.1 619.9L1289.7 626.5M1289.7 619.9L1293.1 626.5M1293.1 632.1L1289.7 638.7M1289.7 632.1L1293.1 638.7M1293.1 644.3L1289.7 650.9M1289.7 644.3L1293.1 650.9M1293.1 656.5L1289.7 663.1M1289.7 656.5L1293.1 663.1M1293.1 668.7L1289.7 675.3M1289.7 668.7L1293.1 675.3M1293.1 680.9L1289.7 687.5M1289.7 680.9L1293.1 687.5M1293.1 693.1L1289.7 699.7M1289.7 693.1L1293.1 699.7M1293.1 705.3L1289.7 711.9M1289.7 705.3L1293.1 711.9M1293.1 717.5L1289.7 724.1M1289.7 717.5L1293.1 724.1M1293.1 729.7L1289.7 736.3M1289.7 729.7L1293.1 736.3M1293.1 741.9L1289.7 748.5M1289.7 741.9L1293.1 748.5M1293.1 754.1L1289.7 760.7M1289.7 754.1L1293.1 760.7M1288.5 765.2L1281.9 761.8M1288.5 761.8L1281.9 765.2M1276.1 765.2L1269.5 761.8M1276.1 761.8L1269.5 765.2M1263.6 765.2L1257.0 761.8M1263.6 761.8L1257.0 765.2M1251.2 765.2L1244.6 761.8M1251.2 761.8L1244.6 765.2M1238.7 765.2L1232.1 761.8M1238.7 761.8L1232.1 765.2M1226.3 765.2L1219.7 761.8M1226.3 761.8L1219.7 765.2M1213.9 765.2L1207.3 761.8M1213.9 761.8L1207.3 765.2M1201.4 765.2L1194.8 761.8M1201.4 761.8L1194.8 765.2M1189.0 765.2L1182.4 761.8M1189.0 761.8L1182.4 765.2M1176.5 765.2L1169.9 761.8M1176.5 761.8L1169.9 765.2M1164.1 765.2L1157.5 761.8M1164.1 761.8L1157.5 765.2M1152.9 760.7L1156.3 754.1M1156.3 760.7L1152.9 754.1M1152.9 748.6L1156.3 742.0M1156.3 748.6L1152.9 742.0M1152.9 736.4L1156.3 729.8M1156.3 736.4L1152.9 729.8M1152.9 724.3L1156.3 717.7M1156.3 724.3L1152.9 717.7M1152.9 712.2L1156.3 705.6M1156.3 712.2L1152.9 705.6M1152.9 700.1L1156.3 693.5M1156.3 700.1L1152.9 693.5M1152.9 687.9L1156.3 681.3M1156.3 687.9L1152.9 681.3M1152.9 675.8L1156.3 669.2M1156.3 675.8L1152.9 669.2M1152.2 668.1L1145.6 664.7M1152.2 664.7L1145.6 668.1M1140.8 668.1L1134.2 664.7M1140.8 664.7L1134.2 668.1M1129.5 668.1L1122.9 664.7M1129.5 664.7L1122.9 668.1M1118.8 662.9L1122.2 656.3M1122.2 662.9L1118.8 656.3M1118.8 649.1L1122.2 642.5M1122.2 649.1L1118.8 642.5M1118.8 635.4L1122.2 628.8M1122.2 635.4L1118.8 628.8M1120.7 622.3L1127.5 619.4M1123.4 624.5L1124.9 617.2M1127.9 613.6L1134.7 610.6M1130.5 615.7L1132.1 608.5M1135.1 604.8L1141.9 601.9M1137.7 607.0L1139.2 599.7M1142.2 596.1L1149.0 593.1M1144.9 598.2L1146.4 591.0M1149.4 587.3L1156.2 584.4M1152.0 589.5L1153.6 582.2M1156.6 578.6L1163.4 575.6M1159.2 580.7L1160.7 573.5M1161.8 569.5L1165.2 562.9M1165.2 569.5L1161.8 562.9M1161.8 556.4L1165.2 549.8M1165.2 556.4L1161.8 549.8M1161.8 543.3L1165.2 536.7M1165.2 543.3L1161.8 536.7M1160.4 535.1L1153.8 531.7M1160.4 531.7L1153.8 535.1M1148.9 530.0L1152.3 523.4M1152.3 530.0L1148.9 523.4M1148.9 516.6L1152.3 510.0M1152.3 516.6L1148.9 510.0M1153.8 504.9L1160.4 508.2M1153.8 508.2L1160.4 504.9M1166.8 504.9L1173.4 508.2M1166.8 508.2L1173.4 504.9M1179.8 504.9L1186.4 508.2M1179.8 508.2L1186.4 504.9M1192.8 504.9L1199.4 508.2M1192.8 508.2L1199.4 504.9M1205.8 504.9L1212.4 508.2M1205.8 508.2L1212.4 504.9M1213.9 504.2L1217.3 497.6M1217.3 504.2L1213.9 497.6M1213.9 492.9L1217.3 486.3M1217.3 492.9L1213.9 486.3M1213.9 481.5L1217.3 474.9M1217.3 481.5L1213.9 474.9M1213.9 470.2L1217.3 463.6M1217.3 470.2L1213.9 463.6M1213.9 458.9L1217.3 452.3M1217.3 458.9L1213.9 452.3M1213.9 447.5L1217.3 440.9M1217.3 447.5L1213.9 440.9M1218.1 436.9L1224.7 440.3M1218.1 440.3L1224.7 436.9M1229.6 436.9L1236.2 440.3M1229.6 440.3L1236.2 436.9M1241.2 436.9L1247.8 440.3M1241.2 440.3L1247.8 436.9M1252.8 436.9L1259.4 440.3M1252.8 440.3L1259.4 436.9M1264.4 436.9L1271.0 440.3M1264.4 440.3L1271.0 436.9M1271.8 435.7L1275.2 429.1M1275.2 435.7L1271.8 429.1M1271.8 423.3L1275.2 416.7M1275.2 423.3L1271.8 416.7M1271.8 410.9L1275.2 404.3M1275.2 410.9L1271.8 404.3M1271.1 403.2L1264.5 399.8M1271.1 399.8L1264.5 403.2M1259.5 403.2L1252.9 399.8M1259.5 399.8L1252.9 403.2M1247.9 403.2L1241.3 399.8M1247.9 399.8L1241.3 403.2M1236.3 403.2L1229.7 399.8M1236.3 399.8L1229.7 403.2M1224.8 403.2L1218.2 399.8M1224.8 399.8L1218.2 403.2M1213.2 403.2L1206.6 399.8M1213.2 399.8L1206.6 403.2M1201.6 403.2L1195.0 399.8M1201.6 399.8L1195.0 403.2M1190.8 398.5L1194.2 391.9M1194.2 398.5L1190.8 391.9M1190.8 385.9L1194.2 379.3M1194.2 385.9L1190.8 379.3M1190.8 373.3L1194.2 366.7M1194.2 373.3L1190.8 366.7M1190.8 360.7L1194.2 354.1M1194.2 360.7L1190.8 354.1M1190.8 348.1L1194.2 341.5M1194.2 348.1L1190.8 341.5M1190.8 335.5L1194.2 328.9M1194.2 335.5L1190.8 328.9M1190.8 322.9L1194.2 316.3M1194.2 322.9L1190.8 316.3M1190.8 310.3L1194.2 303.7M1194.2 310.3L1190.8 303.7M1190.8 297.7L1194.2 291.1M1194.2 297.7L1190.8 291.1M1190.8 285.1L1194.2 278.5M1194.2 285.1L1190.8 278.5" stroke="#fff" stroke-width="0.850" fill="none"/>
<rect x="1379.6" y="316" width="4.1" height="24" fill="#fff" stroke="#000" stroke-width="0.6"/>
<path d="M1379.6 316L1383.6999999999998 328.0L1379.6 340M1383.6999999999998 316L1379.6 328.0L1383.6999999999998 340" stroke="#000" stroke-width="0.5" fill="none"/>
<rect x="1379.6" y="357" width="4.1" height="12" fill="#fff" stroke="#000" stroke-width="0.6"/>
<path d="M1379.6 357L1383.6999999999998 363.0L1379.6 369M1383.6999999999998 357L1379.6 363.0L1383.6999999999998 369" stroke="#000" stroke-width="0.5" fill="none"/>
<rect x="1379.6" y="520" width="4.1" height="30" fill="#fff" stroke="#000" stroke-width="0.6"/>
<path d="M1379.6 520L1383.6999999999998 535.0L1379.6 550M1383.6999999999998 520L1379.6 535.0L1383.6999999999998 550" stroke="#000" stroke-width="0.5" fill="none"/>
<rect x="1379.6" y="360" width="4.1" height="10" fill="#fff" stroke="#000" stroke-width="0.6"/>
<path d="M1379.6 360L1383.6999999999998 365.0L1379.6 370M1383.6999999999998 360L1379.6 365.0L1383.6999999999998 370" stroke="#000" stroke-width="0.5" fill="none"/>
<rect x="1214" y="450" width="4" height="22" fill="#fff" stroke="#000" stroke-width="0.6"/>
<path d="M1214 450L1218 461.0L1214 472M1218 450L1214 461.0L1218 472" stroke="#000" stroke-width="0.5" fill="none"/>
<rect x="1289.5" y="640" width="4" height="15" fill="#fff" stroke="#000" stroke-width="0.6"/>
<path d="M1289.5 640L1293.5 647.5L1289.5 655M1293.5 640L1289.5 647.5L1293.5 655" stroke="#000" stroke-width="0.5" fill="none"/>
<rect x="1152.8" y="705" width="4" height="14" fill="#fff" stroke="#000" stroke-width="0.6"/>
<path d="M1152.8 705L1156.8 712.0L1152.8 719M1156.8 705L1152.8 712.0L1156.8 719" stroke="#000" stroke-width="0.5" fill="none"/>
<rect x="1118.8" y="640" width="4" height="12" fill="#fff" stroke="#000" stroke-width="0.6"/>
<path d="M1118.8 640L1122.8 646.0L1118.8 652M1122.8 640L1118.8 646.0L1122.8 652" stroke="#000" stroke-width="0.5" fill="none"/>
<rect x="1276.5" y="272.800" width="22" height="5" fill="#fff"/>
<rect x="1172.5" y="761.300" width="22" height="5" fill="#fff" />
<rect x="1250.5" y="761.300" width="21" height="5" fill="#fff"/>
<rect x="1289.3" y="620" width="5" height="15" fill="#fff"/>
<rect x="1315" y="578.200" width="14.5" height="5" fill="#fff"/>
<rect x="1379.4" y="410" width="5.2" height="27" fill="#fff"/><rect x="1379.4" y="441.500" width="5.2" height="23.500" fill="#fff"/>
<path d="M1305.7 276V308.7M1305.7 323V362.4M1305.7 379V439.5M1305.7 454V496.8M1305.7 512.3V578M1305.7 346.9H1379.6M1305.7 437.5H1379.6M1336.7 346.9V360M1336.7 374.3V381.5M1336.7 374.3H1351M1187.6 525H1216.2M1188.6 525V572.4M1187.6 572.4H1216.2M1216.2 582H1246M1261.5 582H1289.5M1216.2 572.4V582M1123.2 628H1167.3M1190 600.5V662.6M1217.4 600.5V662.6M1190 600.5H1197M1213.5 600.5H1217.4M1167.3 662.6H1246M1261.5 662.6H1289.5" stroke="#fff000" stroke-width="1.800" fill="none"/>
<path d="M1305.7 276V308.7M1305.7 323V362.4M1305.7 379V439.5M1305.7 454V496.8M1305.7 512.3V578M1305.7 346.9H1379.6M1305.7 437.5H1379.6M1336.7 346.9V360M1336.7 374.3V381.5M1336.7 374.3H1351M1187.6 525H1216.2M1188.6 525V572.4M1187.6 572.4H1216.2M1216.2 582H1246M1261.5 582H1289.5M1216.2 572.4V582M1123.2 628H1167.3M1190 600.5V662.6M1217.4 600.5V662.6M1190 600.5H1197M1213.5 600.5H1217.4M1167.3 662.6H1246M1261.5 662.6H1289.5" stroke="#000" stroke-width="0.8" stroke-dasharray="4 2.5 1 2.5" fill="none"/>
<path d="M1216.2 510V572.400M1167.300 572.400V608.900M1167.300 644.700V666M1161 572.400H1188" stroke="#000" stroke-width="1.400" stroke-dasharray="5 1.5 1 1.5" fill="none"/>
<path d="M1305.700 493.900H1379.600" stroke="#000" stroke-width="1.600"/><path d="M1305.700 381.500H1379.600" stroke="#000" stroke-width="2" stroke-dasharray="7 1"/>
<path d="M1305.700 308.700C1318 311 1322 316 1321 323M1305.700 323H1321M1305.700 362.400C1318 364 1322 370 1320 379M1305.700 379H1320M1305.700 439.500C1318 440 1322 446 1319 454M1305.700 454H1319M1305.700 496.800C1318 498 1322 504 1319 512.300M1305.700 512.300H1319M1336.700 360C1343 361 1347 366 1346.500 374.300M1246 582C1247 592 1252 597 1261.500 597.500M1261.500 582V597.500M1246 662.600C1247 672 1252 677 1261.500 678M1261.500 662.600V678M1197 600.500V614C1206 615 1212 610 1213.500 600.500M1167.300 572.400C1172 560 1178 556 1187 556.500V572M1201 525C1200 532 1204 537 1210 539M1152 628V636M1152 632H1167M1157 645C1162 646 1166 648 1167.300 652M1276.500 263.600V273.400M1298.800 263.600V273.400M1276.500 263.600H1298.800M1281 263.600L1287.500 273L1293 263.600L1298.500 281L1302 293M1384 411H1395C1397 418 1396 421 1388 423.500M1384 423.500H1388C1396 426 1397 432 1395 436.500H1384M1384 442H1396C1398 448 1396 452 1388 453M1384 453H1388C1396 455 1398 460 1396 464.500H1384M1315 582.600C1316 592 1321 596 1329.500 597M1329.500 582.600V597M1293.700 620C1302 621.500 1308 626 1309 632V635.500H1293.700M1172.500 765.500V777.500L1178 775L1183.500 766L1189 775L1194.500 777.500V765.500M1250.500 765.500V776.500L1256 774L1261 766L1266 774L1271.500 776.500V765.500" stroke="#000" stroke-width="0.900" fill="none"/>
<path d="M1242 331h21v1h-21zM1242 334h21v1h-21zM1244 336h17v1h-17zM1242 337h21v1h-21zM1243 339h18v1h-18zM1242 340h21v1h-21zM1244 342h17v1h-17zM1242 343h21v1h-21zM1242 331h1v13h-1zM1262 331h1v13h-1zM1336 303h21v1h-21zM1340 305h13v1h-13zM1336 306h21v1h-21zM1338 308h17v1h-17zM1338 309h17v1h-17zM1338 310h17v1h-17zM1338 311h17v1h-17zM1336 312h21v1h-21zM1339 314h15v1h-15zM1336 315h21v1h-21zM1336 303h1v13h-1zM1356 303h1v13h-1zM1313 356h21v1h-21zM1313 359h21v1h-21zM1315 361h17v1h-17zM1313 362h21v1h-21zM1314 364h18v1h-18zM1313 365h21v1h-21zM1315 367h17v1h-17zM1313 368h21v1h-21zM1313 356h1v13h-1zM1333 356h1v13h-1zM1352 356h21v1h-21zM1352 359h21v1h-21zM1354 361h17v1h-17zM1352 362h21v1h-21zM1353 364h18v1h-18zM1352 365h21v1h-21zM1354 367h17v1h-17zM1352 368h21v1h-21zM1352 356h1v13h-1zM1372 356h1v13h-1zM1336 402h21v1h-21zM1340 404h13v1h-13zM1336 405h21v1h-21zM1338 407h17v1h-17zM1338 408h17v1h-17zM1338 409h17v1h-17zM1338 410h17v1h-17zM1336 411h21v1h-21zM1339 413h15v1h-15zM1336 414h21v1h-21zM1336 402h1v13h-1zM1356 402h1v13h-1zM1336 457h21v1h-21zM1340 459h13v1h-13zM1336 460h21v1h-21zM1338 462h17v1h-17zM1338 463h17v1h-17zM1338 464h17v1h-17zM1338 465h17v1h-17zM1336 466h21v1h-21zM1339 468h15v1h-15zM1336 469h21v1h-21zM1336 457h1v13h-1zM1356 457h1v13h-1zM1253 484h21v1h-21zM1257 486h13v1h-13zM1253 487h21v1h-21zM1255 489h17v1h-17zM1255 490h17v1h-17zM1255 491h17v1h-17zM1255 492h17v1h-17zM1253 493h21v1h-21zM1256 495h15v1h-15zM1253 496h21v1h-21zM1253 484h1v13h-1zM1273 484h1v13h-1zM1336 528h21v1h-21zM1340 530h13v1h-13zM1336 531h21v1h-21zM1338 533h17v1h-17zM1338 534h17v1h-17zM1338 535h17v1h-17zM1338 536h17v1h-17zM1336 537h21v1h-21zM1339 539h15v1h-15zM1336 540h21v1h-21zM1336 528h1v13h-1zM1356 528h1v13h-1zM1195 539h21v1h-21zM1199 541h13v1h-13zM1195 542h21v1h-21zM1197 544h17v1h-17zM1197 545h17v1h-17zM1197 546h17v1h-17zM1197 547h17v1h-17zM1195 548h21v1h-21zM1198 550h15v1h-15zM1195 551h21v1h-21zM1195 539h1v13h-1zM1215 539h1v13h-1zM1122 531h21v1h-21zM1126 533h13v1h-13zM1122 534h21v1h-21zM1124 536h17v1h-17zM1124 537h17v1h-17zM1124 538h17v1h-17zM1124 539h17v1h-17zM1122 540h21v1h-21zM1125 542h15v1h-15zM1122 543h21v1h-21zM1122 531h1v13h-1zM1142 531h1v13h-1zM1142 607h21v1h-21zM1142 610h21v1h-21zM1144 612h17v1h-17zM1142 613h21v1h-21zM1143 615h18v1h-18zM1142 616h21v1h-21zM1144 618h17v1h-17zM1142 619h21v1h-21zM1142 607h1v13h-1zM1162 607h1v13h-1zM1222 609h21v1h-21zM1226 611h13v1h-13zM1222 612h21v1h-21zM1224 614h17v1h-17zM1224 615h17v1h-17zM1224 616h17v1h-17zM1224 617h17v1h-17zM1222 618h21v1h-21zM1225 620h15v1h-15zM1222 621h21v1h-21zM1222 609h1v13h-1zM1242 609h1v13h-1zM1196 623h21v1h-21zM1196 626h21v1h-21zM1198 628h17v1h-17zM1196 629h21v1h-21zM1197 631h18v1h-18zM1196 632h21v1h-21zM1198 634h17v1h-17zM1196 635h21v1h-21zM1196 623h1v13h-1zM1216 623h1v13h-1zM1136 638h21v1h-21zM1140 640h13v1h-13zM1136 641h21v1h-21zM1138 643h17v1h-17zM1138 644h17v1h-17zM1138 645h17v1h-17zM1138 646h17v1h-17zM1136 647h21v1h-21zM1139 649h15v1h-15zM1136 650h21v1h-21zM1136 638h1v13h-1zM1156 638h1v13h-1zM1215 704h21v1h-21zM1215 707h21v1h-21zM1217 709h17v1h-17zM1215 710h21v1h-21zM1216 712h18v1h-18zM1215 713h21v1h-21zM1217 715h17v1h-17zM1215 716h21v1h-21zM1215 704h1v13h-1zM1235 704h1v13h-1zM1075 270h31v1h-31zM1086 272h8v1h-8zM1075 273h31v1h-31zM1083 275h14v1h-14zM1075 276h31v1h-31zM1079 278h23v1h-23zM1075 279h31v1h-31zM1075 281h31v1h-31zM1075 282h31v1h-31zM1075 283h31v1h-31zM1075 284h31v1h-31zM1075 285h31v1h-31zM1075 286h31v1h-31zM1082 288h16v1h-16zM1075 289h31v1h-31zM1075 270h1v20h-1zM1105 270h1v20h-1zM1276 244h31v1h-31zM1286 246h10v1h-10zM1276 247h31v1h-31zM1284 249h15v1h-15zM1276 250h31v1h-31zM1280 252h23v1h-23zM1276 253h31v1h-31zM1277 255h28v1h-28zM1276 256h31v1h-31zM1276 257h31v1h-31zM1276 258h31v1h-31zM1276 259h31v1h-31zM1283 260h17v1h-17zM1283 261h17v1h-17zM1276 262h31v1h-31zM1276 263h31v1h-31zM1276 244h1v20h-1zM1306 244h1v20h-1zM1420 260h30v1h-30zM1431 262h8v1h-8zM1420 263h30v1h-30zM1428 265h14v1h-14zM1420 266h30v1h-30zM1424 268h22v1h-22zM1420 269h30v1h-30zM1420 271h30v1h-30zM1420 272h30v1h-30zM1420 273h30v1h-30zM1420 274h30v1h-30zM1420 275h30v1h-30zM1420 276h30v1h-30zM1427 278h16v1h-16zM1420 279h30v1h-30zM1420 260h1v20h-1zM1449 260h1v20h-1zM1420 318h30v1h-30zM1431 320h8v1h-8zM1420 321h30v1h-30zM1428 323h14v1h-14zM1420 324h30v1h-30zM1424 326h22v1h-22zM1420 327h30v1h-30zM1420 329h30v1h-30zM1420 330h30v1h-30zM1420 331h30v1h-30zM1420 332h30v1h-30zM1420 333h30v1h-30zM1420 334h30v1h-30zM1427 336h16v1h-16zM1420 337h30v1h-30zM1420 318h1v20h-1zM1449 318h1v20h-1zM1418 376h30v1h-30zM1430 377h6v1h-6zM1430 378h6v1h-6zM1418 379h30v1h-30zM1424 381h18v1h-18zM1418 382h30v1h-30zM1418 384h30v1h-30zM1418 386h30v1h-30zM1418 387h30v1h-30zM1418 389h30v1h-30zM1418 391h30v1h-30zM1425 393h16v1h-16zM1418 394h30v1h-30zM1418 395h30v1h-30zM1418 376h1v20h-1zM1447 376h1v20h-1zM1074 495h30v1h-30zM1084 497h10v1h-10zM1074 498h30v1h-30zM1082 500h14v1h-14zM1074 501h30v1h-30zM1078 503h22v1h-22zM1074 504h30v1h-30zM1075 506h27v1h-27zM1074 507h30v1h-30zM1074 508h30v1h-30zM1074 509h30v1h-30zM1074 510h30v1h-30zM1081 511h16v1h-16zM1081 512h16v1h-16zM1074 513h30v1h-30zM1074 514h30v1h-30zM1074 495h1v20h-1zM1103 495h1v20h-1zM1074 546h30v1h-30zM1084 548h10v1h-10zM1074 549h30v1h-30zM1082 551h14v1h-14zM1078 552h22v1h-22zM1076 553h25v1h-25zM1076 554h25v1h-25zM1074 555h30v1h-30zM1074 556h30v1h-30zM1074 557h30v1h-30zM1074 558h30v1h-30zM1074 560h30v1h-30zM1074 562h30v1h-30zM1081 564h16v1h-16zM1074 565h30v1h-30zM1074 546h1v20h-1zM1103 546h1v20h-1zM1419 458h31v1h-31zM1430 460h8v1h-8zM1419 461h31v1h-31zM1427 463h14v1h-14zM1419 464h31v1h-31zM1423 466h23v1h-23zM1419 467h31v1h-31zM1419 469h31v1h-31zM1419 470h31v1h-31zM1419 471h31v1h-31zM1419 472h31v1h-31zM1419 473h31v1h-31zM1419 474h31v1h-31zM1426 476h16v1h-16zM1419 477h31v1h-31zM1419 458h1v20h-1zM1449 458h1v20h-1zM1419 551h31v1h-31zM1429 553h10v1h-10zM1419 554h31v1h-31zM1427 556h15v1h-15zM1423 557h23v1h-23zM1421 558h26v1h-26zM1421 559h26v1h-26zM1419 560h31v1h-31zM1419 561h31v1h-31zM1419 562h31v1h-31zM1419 563h31v1h-31zM1419 565h31v1h-31zM1419 567h31v1h-31zM1426 569h17v1h-17zM1419 570h31v1h-31zM1419 551h1v20h-1zM1449 551h1v20h-1zM1419 588h31v1h-31zM1429 590h10v1h-10zM1419 591h31v1h-31zM1427 593h15v1h-15zM1419 594h31v1h-31zM1423 596h23v1h-23zM1419 597h31v1h-31zM1420 599h28v1h-28zM1419 600h31v1h-31zM1419 601h31v1h-31zM1419 602h31v1h-31zM1419 603h31v1h-31zM1426 604h17v1h-17zM1426 605h17v1h-17zM1419 606h31v1h-31zM1419 607h31v1h-31zM1419 588h1v20h-1zM1449 588h1v20h-1zM1419 622h31v1h-31zM1431 623h6v1h-6zM1431 624h6v1h-6zM1419 625h31v1h-31zM1425 627h19v1h-19zM1419 628h31v1h-31zM1419 630h31v1h-31zM1419 632h31v1h-31zM1419 633h31v1h-31zM1419 635h31v1h-31zM1419 637h31v1h-31zM1426 639h17v1h-17zM1419 640h31v1h-31zM1419 641h31v1h-31zM1419 622h1v20h-1zM1449 622h1v20h-1zM1076 614h30v1h-30zM1086 616h10v1h-10zM1076 617h30v1h-30zM1084 619h14v1h-14zM1080 620h22v1h-22zM1078 621h25v1h-25zM1078 622h25v1h-25zM1076 623h30v1h-30zM1076 624h30v1h-30zM1076 625h30v1h-30zM1076 626h30v1h-30zM1076 628h30v1h-30zM1076 630h30v1h-30zM1083 632h16v1h-16zM1076 633h30v1h-30zM1076 614h1v20h-1zM1105 614h1v20h-1zM1074 642h30v1h-30zM1084 644h10v1h-10zM1074 645h30v1h-30zM1082 647h14v1h-14zM1078 648h22v1h-22zM1076 649h25v1h-25zM1076 650h25v1h-25zM1074 651h30v1h-30zM1074 652h30v1h-30zM1074 653h30v1h-30zM1074 654h30v1h-30zM1074 656h30v1h-30zM1074 658h30v1h-30zM1081 660h16v1h-16zM1074 661h30v1h-30zM1074 642h1v20h-1zM1103 642h1v20h-1zM1420 665h30v1h-30zM1431 667h8v1h-8zM1420 668h30v1h-30zM1428 670h14v1h-14zM1420 671h30v1h-30zM1424 673h22v1h-22zM1420 674h30v1h-30zM1420 676h30v1h-30zM1420 677h30v1h-30zM1420 678h30v1h-30zM1420 679h30v1h-30zM1420 680h30v1h-30zM1420 681h30v1h-30zM1427 683h16v1h-16zM1420 684h30v1h-30zM1420 665h1v20h-1zM1449 665h1v20h-1zM1422 736h30v1h-30zM1432 738h10v1h-10zM1422 739h30v1h-30zM1430 741h14v1h-14zM1422 742h30v1h-30zM1426 744h22v1h-22zM1422 745h30v1h-30zM1423 747h27v1h-27zM1422 748h30v1h-30zM1422 749h30v1h-30zM1422 750h30v1h-30zM1422 751h30v1h-30zM1429 752h16v1h-16zM1429 753h16v1h-16zM1422 754h30v1h-30zM1422 755h30v1h-30zM1422 736h1v20h-1zM1451 736h1v20h-1zM1076 752h30v1h-30zM1087 754h8v1h-8zM1076 755h30v1h-30zM1084 757h14v1h-14zM1076 758h30v1h-30zM1080 760h22v1h-22zM1076 761h30v1h-30zM1076 763h30v1h-30zM1076 764h30v1h-30zM1076 765h30v1h-30zM1076 766h30v1h-30zM1076 767h30v1h-30zM1076 768h30v1h-30zM1083 770h16v1h-16zM1076 771h30v1h-30zM1076 752h1v20h-1zM1105 752h1v20h-1zM1308 334h31v1h-31zM1318 336h10v1h-10zM1308 337h31v1h-31zM1316 339h15v1h-15zM1308 340h31v1h-31zM1312 342h23v1h-23zM1308 343h31v1h-31zM1309 345h28v1h-28zM1308 346h31v1h-31zM1308 347h31v1h-31zM1308 348h31v1h-31zM1308 349h31v1h-31zM1315 350h17v1h-17zM1315 351h17v1h-17zM1308 352h31v1h-31zM1308 353h31v1h-31zM1308 334h1v20h-1zM1338 334h1v20h-1zM1269 374h30v1h-30zM1279 376h10v1h-10zM1269 377h30v1h-30zM1277 379h14v1h-14zM1269 380h30v1h-30zM1273 382h22v1h-22zM1269 383h30v1h-30zM1270 385h27v1h-27zM1269 386h30v1h-30zM1269 387h30v1h-30zM1269 388h30v1h-30zM1269 389h30v1h-30zM1276 390h16v1h-16zM1276 391h16v1h-16zM1269 392h30v1h-30zM1269 393h30v1h-30zM1269 374h1v20h-1zM1298 374h1v20h-1zM1301 392h30v1h-30zM1311 394h10v1h-10zM1301 395h30v1h-30zM1309 397h14v1h-14zM1301 398h30v1h-30zM1305 400h22v1h-22zM1301 401h30v1h-30zM1302 403h27v1h-27zM1301 404h30v1h-30zM1301 405h30v1h-30zM1301 406h30v1h-30zM1301 407h30v1h-30zM1308 408h16v1h-16zM1308 409h16v1h-16zM1301 410h30v1h-30zM1301 411h30v1h-30zM1301 392h1v20h-1zM1330 392h1v20h-1z" fill="#000" shape-rendering="crispEdges"/>
<path d="M1221 280.100L1268.700 394.600M1223.500 280.100L1266 375L1275 398M1340.300 279.600L1301.400 285.300L1290.200 330.200L1289 400M1340.300 279.600L1305.700 306.300L1290.200 314.700L1285.400 320.600V400M1345 350.500L1310 358L1295 369.500L1293 400M1349 349L1312 355L1297 366M1377.200 392.200L1300.900 416L1299 440M1377.200 392.200L1330 408L1302.100 428M1376 469.400L1306.900 494.400L1250.800 515.900C1240 518 1230 518.300 1217.400 518.300M1376 469.400C1378 500 1365 540 1340.300 575M1222 522.400C1258 522 1298.500 538 1340.300 575" stroke="#b51a1a" stroke-width="1.100" fill="none"/>
<path d="M1216 509.8H1219.0L1276.5 455.0L1278.0 441.0V404.0M1216 511.3H1220.6L1280.3 453.4L1281.6 440.5V403.0M1216 512.8H1222.2L1284.1 451.8L1285.2 440.0V402.0M1216 514.3H1223.8L1287.9 450.2L1288.8 439.5V401.0M1216 515.8H1225.4L1291.7 448.6L1292.4 439.0V400.0M1216 517.3H1227.0L1295.5 447.0L1296.0 438.5V399.0M1216 518.8H1228.6L1299.3 445.4L1299.6 438.0V398.0" stroke="#a81818" stroke-width="1.150" fill="none"/>
<rect x="1179.2" y="511.2" width="42" height="2.700" fill="#b02020"/><polygon points="1179.2,515 1222,515 1225,518.900 1183.500,518.900 1179.200,516.800" fill="#b02020"/><path d="M1185 509.600H1220" stroke="#b02020" stroke-width="0.800"/><path d="M1184 520.400H1194L1195 521.400H1206L1207 522.400H1222" stroke="#b02020" stroke-width="0.800" fill="none"/>
<rect x="1177.1" y="508.300" width="8" height="1.400" fill="#ff1020"/><rect x="1177.1" y="509.600" width="8" height="1.500" fill="#1020ff"/>
<rect x="1227" y="277.5" width="8" height="4.2" fill="#000"/>
<rect x="1338" y="277.5" width="8" height="4.5" fill="#000"/>
<rect x="1302" y="282" width="2.5" height="8" fill="#000"/>
<rect x="1261" y="394.5" width="8" height="3" fill="#000"/>
<rect x="1300.5" y="412" width="2.5" height="13" fill="#000"/>
<rect x="1377.5" y="391" width="2.5" height="8" fill="#000"/>
<rect x="1375.5" y="466" width="2.5" height="8" fill="#000"/>
<rect x="1290" y="574.5" width="12" height="4" fill="#000"/>
<rect x="1327" y="574.5" width="12" height="4.5" fill="#000"/>
<rect x="1161" y="507.5" width="8" height="3.5" fill="#000"/>
<rect x="1190.5" y="548" width="3" height="9" fill="#000"/>
<rect x="1289.5" y="588" width="3.5" height="14" fill="#000"/>
<rect x="1131" y="629" width="8" height="3" fill="#000"/>
<rect x="1185.8" y="643" width="2.2" height="17.5" fill="#000"/>
<rect x="1286.5" y="695" width="4" height="14" fill="#000"/>
<rect x="1177.5" y="759.5" width="12" height="2.5" fill="#000"/>
<rect x="1254.5" y="759.5" width="12" height="2.5" fill="#000"/>
<rect x="1157" y="572" width="7" height="2.5" fill="#000"/>
<path d="M1105.8 281.8L1222.2 278.9M1420.2 274.1L1383.7 277.2M1420.2 334.2L1346.2 350.5M1418.5 390.3L1379.6 395.8M1103.6 508L1160.2 510.4M1103.6 558.8L1191.2 554M1419.4 471L1377.2 474.1M1419.4 566L1339.1 575.5M1419.4 598.2L1305.7 576M1419.4 630.4L1292.6 599.8M1104.6 628L1133.9 630.4M1102.9 654.2L1186.4 653M1419.5 680.5L1294.5 700.5M1422.4 748.8L1255.2 759M1105.7 764.3L1179 759" stroke="#000" stroke-width="1" fill="none"/>
<circle cx="1332.600" cy="719" r="5" fill="#fff" stroke="#000" stroke-width="0.800"/><path d="M1327.600 719.500H1340" stroke="#000" stroke-width="0.900"/><path d="M1328.500 721.500Q1332.600 717.500 1336.700 721.500" stroke="#000" stroke-width="0.500" fill="none"/>
</g>
<path d="M905 792.500H1678" stroke="#000" stroke-width="1" stroke-dasharray="1 1" shape-rendering="crispEdges"/><path d="M906 793.500H1678" stroke="#000" stroke-width="1" stroke-dasharray="1 1" shape-rendering="crispEdges" opacity="0.550"/>
</svg>
<!-- properties panel -->
<div class="hl" style="left:906px;top:796px;width:52px;height:26px"></div>
<svg style="left:904px;top:794px;letter-spacing:0" width="140" height="30" viewBox="904 794 140 30">
<!-- pin -->
<path d="M911 809H915" stroke="#9a9ab0" stroke-width="1"/>
<ellipse cx="917.500" cy="809" rx="2.200" ry="4.200" fill="#4a5cf0"/><rect x="917.500" y="806.300" width="6" height="5.400" fill="#5a6cf8"/><ellipse cx="924.500" cy="809" rx="2.300" ry="4.600" fill="#6f80ff"/>
<ellipse cx="921" cy="808" rx="2.500" ry="1.200" fill="#9fb0ff" opacity=".7"/>
<!-- list icon -->
<rect x="937.500" y="801.500" width="15" height="14" fill="#f1f1f1" stroke="#9a9a9a" stroke-width="0.900"/>
<path d="M941 804.500V812.500M941 808.500H943M941 812.500H943" stroke="#888" stroke-width="0.600" fill="none"/>
<ellipse cx="941.200" cy="804.500" rx="1.500" ry="1" fill="#fff" stroke="#1a6fd0" stroke-width="0.800"/><ellipse cx="944" cy="808.500" rx="1.500" ry="1" fill="#fff" stroke="#1a6fd0" stroke-width="0.800"/><ellipse cx="944" cy="812.500" rx="1.500" ry="1" fill="#fff" stroke="#1a6fd0" stroke-width="0.800"/>
<path d="M944.500 804.500H949M947 808.500H951M947 812.500H951" stroke="#777" stroke-width="0.800"/>
<!-- AZ -->
<text x="967.500" y="808" font-family="Liberation Serif" font-weight="bold" font-size="9.500" fill="#666" text-anchor="middle">A</text>
<text x="967.500" y="816.500" font-family="Liberation Serif" font-weight="bold" font-size="9.500" fill="#666" text-anchor="middle">Z</text>
<path d="M976.500 803V814.500M975 812.500L976.500 815L978 812.500" stroke="#4a8fe0" stroke-width="0.800" fill="none"/>
<!-- tree plus -->
<path d="M991.500 805V816.500M991.500 811.500H996M991.500 816H996" stroke="#222" stroke-width="1" fill="none"/>
<circle cx="991.500" cy="803.500" r="2" fill="#3ed22e" stroke="#2a9a1e" stroke-width="0.500"/><circle cx="996.500" cy="807.800" r="1.900" fill="#3ed22e" stroke="#2a9a1e" stroke-width="0.500"/><circle cx="995.500" cy="815" r="1.700" fill="#3ed22e" stroke="#2a9a1e" stroke-width="0.500"/>
<rect x="997.500" y="808.500" width="8" height="8" fill="#fff" stroke="#111" stroke-width="1"/><path d="M999.500 812.500H1003.500M1001.500 810.500V814.500" stroke="#111" stroke-width="1"/>
<!-- tree minus -->
<circle cx="1017.500" cy="803.500" r="2" fill="#3ed22e" stroke="#2a9a1e" stroke-width="0.500"/>
<path d="M1019.500 803.500H1029" stroke="#222" stroke-width="0.900"/><circle cx="1029" cy="803.500" r="1.100" fill="#111"/>
<path d="M1016.500 805.500L1017.500 806.500L1018.500 805.500" stroke="#555" stroke-width="0.700" fill="none"/>
<rect x="1022.500" y="808.500" width="8" height="8" fill="#fff" stroke="#111" stroke-width="1"/><path d="M1024.500 812.500H1028.500" stroke="#111" stroke-width="1"/>
</svg>
<div class="abs" style="left:1039.500px;top:802px;font-size:11.800px;font-weight:bold;color:#111;line-height:14px;white-space:nowrap;letter-spacing:-0.050px">1 object of type 'Floor'</div>
<div class="abs" style="left:904px;top:823px;width:774px;height:25px;background:#e4eefc;border:1px solid #767676;border-bottom-width:1.500px"></div>
<div class="abs" style="left:905px;top:824px;width:754px;height:1px;background:#3a95ea"></div>
<div class="abs" style="left:905px;top:824px;width:1px;height:22px;background:#3a95ea"></div>
<svg style="left:918px;top:835px" width="8" height="8" viewBox="0 0 8 8"><polygon points="7,0.500 7,7 0.500,7" fill="#707070"/></svg>
<div class="abs" style="left:932px;top:828px;font-size:10.500px;font-weight:bold;color:#111;line-height:14px;white-space:nowrap;letter-spacing:0.050px">Floor's Properties</div>
<div class="abs" style="left:1659px;top:824.500px;width:18px;height:22px;background:#d2d2d2"></div>
<div class="abs" style="left:1660px;top:826px;width:15px;height:8px;background:#fff"></div>
<div class="abs" style="left:1660px;top:837px;width:15px;height:8px;background:#fff"></div>
<svg style="left:1660px;top:826px" width="15" height="19" viewBox="0 0 15 19"><polygon points="5,5.500 7.500,3 10,5.500" fill="#707070"/><polygon points="5,13.500 10,13.500 7.500,16" fill="#707070"/></svg>
<div class="abs" style="left:904px;top:848.500px;width:774px;height:4px;background:#e6eefa"></div>
<div class="abs" style="left:904px;top:852px;width:774px;height:153px;background:#dfe8f4;border:1px solid #767676;border-bottom:none"></div>
<!-- window borders -->
<div class="abs" style="left:1px;top:144px;width:1px;height:861px;background:#6e6e6e"></div>
<div class="abs" style="left:1678px;top:144px;width:1px;height:861px;background:#6e6e6e"></div>
<div class="abs" style="left:1px;top:1004px;width:1678px;height:1px;background:#6e6e6e"></div>
<div class="abs" style="left:0;top:0;width:1px;height:1006px;background:#2d5ba6"></div>
<div class="abs" style="left:1679px;top:0;width:1px;height:1006px;background:#2d5ba6"></div>
<div class="abs" style="left:0;top:1005px;width:1680px;height:1px;background:#2d5ba6"></div>

</body></html>
